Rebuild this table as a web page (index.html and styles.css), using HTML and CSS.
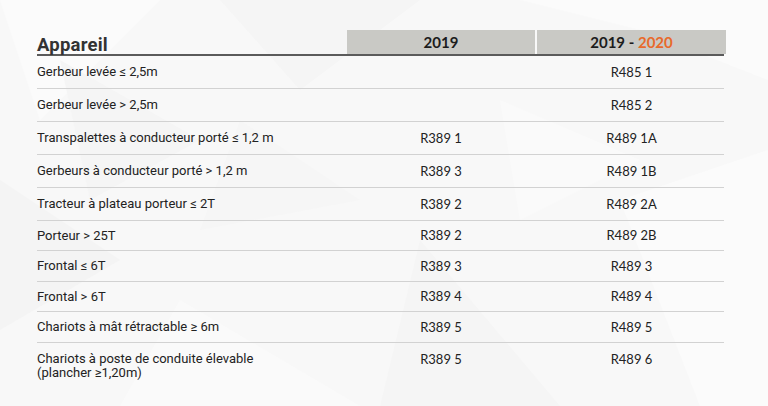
FILE: index.html
```html
<!DOCTYPE html>
<html lang="fr">
<head>
<meta charset="utf-8">
<title>Appareil</title>
<link rel="stylesheet" href="styles.css">
</head>
<body>
<main class="page">
  <div class="table">
    <div class="head">
      <div class="head-label">Appareil</div>
      <div class="head-year">2019</div>
      <div class="head-year">2019 - <span class="accent">2020</span></div>
    </div>
    <div class="row"><div class="label">Gerbeur levée ≤ 2,5m</div><div class="code"></div><div class="code">R485 1</div></div>
    <div class="row"><div class="label">Gerbeur levée &gt; 2,5m</div><div class="code"></div><div class="code">R485 2</div></div>
    <div class="row tall"><div class="label">Transpalettes à conducteur porté ≤ 1,2 m</div><div class="code">R389 1</div><div class="code">R489 1A</div></div>
    <div class="row"><div class="label">Gerbeurs à conducteur porté &gt; 1,2 m</div><div class="code">R389 3</div><div class="code">R489 1B</div></div>
    <div class="row"><div class="label">Tracteur à plateau porteur ≤ 2T</div><div class="code">R389 2</div><div class="code">R489 2A</div></div>
    <div class="row short"><div class="label">Porteur &gt; 25T</div><div class="code">R389 2</div><div class="code">R489 2B</div></div>
    <div class="row short"><div class="label">Frontal ≤ 6T</div><div class="code">R389 3</div><div class="code">R489 3</div></div>
    <div class="row short"><div class="label">Frontal &gt; 6T</div><div class="code">R389 4</div><div class="code">R489 4</div></div>
    <div class="row short"><div class="label">Chariots à mât rétractable ≥ 6m</div><div class="code">R389 5</div><div class="code">R489 5</div></div>
    <div class="row last"><div class="label">Chariots à poste de conduite élevable<br>(plancher ≥1,20m)</div><div class="code">R389 5</div><div class="code">R489 6</div></div>
  </div>
</main>
</body>
</html>
```
FILE: styles.css
```css
html, body {
  margin: 0;
  padding: 0;
}
body {
  width: 768px;
  height: 406px;
  overflow: hidden;
  background-color: #f8f8f8;
  background-image: url("data:image/svg+xml;utf8,<svg xmlns='http://www.w3.org/2000/svg' width='768' height='406'><polygon points='0,0 160,0 40,120' fill='%23fbfbfb'/><polygon points='220,0 420,0 300,90' fill='%23f5f5f5'/><polygon points='520,0 768,0 768,80 640,30' fill='%23fbfbfb'/><polygon points='0,180 120,260 0,330' fill='%23f4f4f4'/><polygon points='180,300 360,406 120,406' fill='%23fafafa'/><polygon points='420,240 560,406 380,406' fill='%23f5f5f5'/><polygon points='620,200 768,150 768,406 700,406' fill='%23fbfbfb'/><polygon points='240,120 360,200 200,230' fill='%23f6f6f6'/><polygon points='500,100 640,160 520,220' fill='%23fafafa'/><polygon points='60,60 200,140 90,200' fill='%23f5f5f5'/></svg>");
  font-family: Roboto, "Liberation Sans", sans-serif;
  color: #222;
}
.page {
  padding: 30px 0 0 37px;
}
.table {
  width: 687px;
}
.head,
.row {
  display: grid;
  grid-template-columns: 308px 188px 189px;
  column-gap: 2px;
}
.head {
  height: 24px;
  border-bottom: 2px solid #5b5b5b;
}
.head-label {
  align-self: end;
  font-size: 18.5px;
  line-height: 1;
  font-weight: 700;
  color: #333;
  letter-spacing: 0.2px;
}
.head-year {
  background: #c9c9c5;
  text-align: center;
  font-family: Lato, "DejaVu Sans", sans-serif;
  font-weight: 700;
  font-size: 15px;
  line-height: 24px;
  color: #1c1c1c;
}
.accent {
  color: #e8692b;
}
.row {
  height: 32.8px;
  box-sizing: border-box;
  border-bottom: 1px solid #d2d2d2;
  align-items: center;
  font-size: 13px;
}
.row.tall {
  height: 33.5px;
}
.row.short {
  height: 30.5px;
}
.row.last {
  height: auto;
  border-bottom: none;
  align-items: start;
  padding-top: 9px;
  line-height: 14px;
}
.label {
  color: #222;
}
.code {
  text-align: center;
  font-family: Lato, "DejaVu Sans", sans-serif;
  color: #222;
}
```
